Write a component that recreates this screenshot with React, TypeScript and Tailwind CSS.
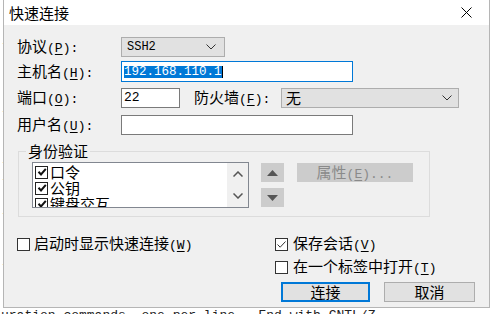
import React from "react";

const cjk = "font-['Noto_Sans_CJK_SC',sans-serif]";
const mono = "font-['Liberation_Mono',monospace]";

const terminalLines = [
  "",
  "- ",
  "",
  ".",
  "",
  "-",
  "",
  "",
  "-",
  "- ",
  "",
  "-",
  "",
  ".",
  "-",
  "",
  ".",
  "uration commands, one per line.  End with CNTL/Z.",
];

function Accel({ text, k, colon = true }: { text: string; k: string; colon?: boolean }) {
  return (
    <span className="whitespace-nowrap">
      {text}
      <span className={`${mono} text-[13px]`}>
        (<span className="underline underline-offset-2">{k}</span>){colon ? ":" : ""}
      </span>
    </span>
  );
}

function Chevron() {
  return (
    <svg width="10" height="6" viewBox="0 0 10 6">
      <path d="M0.5 0.5 L5 5 L9.5 0.5" fill="none" stroke="#333" strokeWidth="1" />
    </svg>
  );
}

function CheckBox({ checked }: { checked: boolean }) {
  return (
    <span className="flex h-[13px] w-[13px] shrink-0 items-center justify-center border border-[#333] bg-white">
      {checked && (
        <svg width="11" height="11" viewBox="0 0 11 11">
          <path d="M1.5 5.5 L4.2 8.2 L9.5 2.5" fill="none" stroke="#333" strokeWidth="1" />
        </svg>
      )}
    </span>
  );
}

function ListCheck() {
  return (
    <span className="flex h-[13px] w-[13px] shrink-0 items-center justify-center border-[1.5px] border-[#222] bg-white">
      <svg width="10" height="10" viewBox="0 0 10 10">
        <path d="M1.5 4.8 L4 7.5 L8.8 1.8" fill="none" stroke="#111" strokeWidth="2" />
      </svg>
    </span>
  );
}

function Row({ children, className = "" }: { children: React.ReactNode; className?: string }) {
  return <div className={`flex items-center ${className}`}>{children}</div>;
}

export default function App() {
  const authItems = ["口令", "公钥", "键盘交互"];

  return (
    <div className={`relative h-[314px] w-[492px] overflow-hidden bg-white ${cjk}`}>
      {/* terminal behind the dialog */}
      <div className={`flex flex-col pt-[18px] text-[13px] leading-[17px] text-[#222] ${mono}`}>
        {terminalLines.map((line, i) => (
          <div key={i} className="h-[17px] whitespace-pre pl-[1px]">
            {line}
          </div>
        ))}
      </div>

      <div className="absolute left-[3px] top-0 flex h-[308px] w-[487px] flex-col border-x border-b border-[#b5b5b5] text-[15px] text-black">
        {/* title bar */}
        <div className="flex h-[25px] items-center justify-between bg-white">
          <span className="pl-[5px] leading-[25px]">快速连接</span>
          <span className="flex h-[25px] w-[46px] items-center justify-center">
            <svg width="11" height="11" viewBox="0 0 11 11">
              <path d="M0.5 0.5 L10.5 10.5 M10.5 0.5 L0.5 10.5" stroke="#000" strokeWidth="1" />
            </svg>
          </span>
        </div>

        {/* body */}
        <div className="flex flex-1 flex-col bg-[#f0f0f0] pl-[13px] pt-[12px]">
          <Row className="h-[20px]">
            <span className="w-[104px]">
              <Accel text="协议" k="P" />
            </span>
            <div className="flex h-[20px] w-[104px] items-center justify-between border border-[#adadad] bg-[#e1e1e1] pl-[5px] pr-[8px]">
              <span className={`${mono} text-[12px]`}>SSH2</span>
              <Chevron />
            </div>
          </Row>

          <Row className="mt-[4px] h-[21px]">
            <span className="w-[104px]">
              <Accel text="主机名" k="H" />
            </span>
            <div className="flex h-[21px] w-[232px] items-center border border-[#0078d7] bg-white pl-[2px]">
              <span className={`${mono} border-r border-black bg-[#0078d7] text-[12.5px] leading-[12px] text-white`}>
                192.168.110.1
              </span>
            </div>
          </Row>

          <Row className="mt-[6px] h-[20px]">
            <span className="w-[104px]">
              <Accel text="端口" k="O" />
            </span>
            <div className="flex h-[20px] w-[59px] items-center border border-[#7a7a7a] bg-white pl-[2px]">
              <span className={`${mono} text-[13px]`}>22</span>
            </div>
            <span className="ml-[14px] w-[87px]">
              <Accel text="防火墙" k="F" />
            </span>
            <div className="flex h-[20px] w-[178px] items-center justify-between border border-[#adadad] bg-[#e1e1e1] pl-[4px] pr-[6px]">
              <span>无</span>
              <Chevron />
            </div>
          </Row>

          <Row className="mt-[7px] h-[20px]">
            <span className="w-[104px]">
              <Accel text="用户名" k="U" />
            </span>
            <div className="h-[20px] w-[232px] border border-[#7a7a7a] bg-white" />
          </Row>

          {/* authentication group */}
          <fieldset className="ml-[1px] mt-[7px] w-[412px] border border-[#dcdcdc] pb-[8px]">
            <legend className="ml-[7px] px-[2px] leading-[18px]">身份验证</legend>
            <div className="flex pl-[13px] pt-[2px]">
              <div className="flex h-[46px] w-[217px] border border-[#828790] bg-white">
                <div className="flex flex-1 flex-col overflow-hidden pl-[2px] pt-[1px]">
                  {authItems.map((item) => (
                    <div key={item} className="flex h-[16px] shrink-0 items-center gap-[2px] leading-[16px]">
                      <ListCheck />
                      <span>{item}</span>
                    </div>
                  ))}
                </div>
                <div className="flex w-[21px] flex-col bg-[#f0f0f0]">
                  <div className="flex flex-1 items-center justify-center">
                    <svg width="10" height="6" viewBox="0 0 10 6">
                      <path d="M0.5 5.5 L5 1 L9.5 5.5" fill="none" stroke="#555" strokeWidth="1.5" />
                    </svg>
                  </div>
                  <div className="flex flex-1 items-center justify-center">
                    <svg width="10" height="6" viewBox="0 0 10 6">
                      <path d="M0.5 0.5 L5 5 L9.5 0.5" fill="none" stroke="#555" strokeWidth="1.5" />
                    </svg>
                  </div>
                </div>
              </div>

              <div className="ml-[12px] mt-[1px] flex flex-col gap-[6px]">
                <div className="flex h-[19px] w-[23px] items-center justify-center bg-[#cccccc]">
                  <svg width="11" height="6" viewBox="0 0 11 6">
                    <path d="M0 6 L5.5 0 L11 6 Z" fill="#555" />
                  </svg>
                </div>
                <div className="flex h-[19px] w-[23px] items-center justify-center bg-[#cccccc]">
                  <svg width="11" height="6" viewBox="0 0 11 6">
                    <path d="M0 0 L5.5 6 L11 0 Z" fill="#555" />
                  </svg>
                </div>
              </div>

              <div className="ml-[13px] mt-[1px] flex h-[19px] w-[116px] items-center justify-center bg-[#cccccc] text-[#8a8a8a]">
                <span>
                  属性
                  <span className={`${mono} text-[13px]`}>
                    (<span className="underline underline-offset-2">E</span>)...
                  </span>
                </span>
              </div>
            </div>
          </fieldset>

          {/* options and buttons */}
          <div className="mt-[19px] flex">
            <div className="w-[258px]">
              <label className="flex h-[16px] items-center gap-[4px] leading-[16px]">
                <CheckBox checked={false} />
                <Accel text="启动时显示快速连接" k="W" colon={false} />
              </label>
            </div>
            <div className="flex flex-col">
              <label className="flex h-[16px] items-center gap-[5px] leading-[16px]">
                <CheckBox checked />
                <Accel text="保存会话" k="V" colon={false} />
              </label>
              <label className="mt-[7px] flex h-[16px] items-center gap-[5px] leading-[16px]">
                <CheckBox checked={false} />
                <Accel text="在一个标签中打开" k="T" colon={false} />
              </label>
              <div className="ml-[6px] mt-[7px] flex gap-[14px]">
                <button
                  type="button"
                  className="flex h-[20px] w-[89px] items-center justify-center border-2 border-[#0078d7] bg-[#e1e1e1] leading-[16px]"
                >
                  连接
                </button>
                <button
                  type="button"
                  className="flex h-[20px] w-[91px] items-center justify-center border border-[#adadad] bg-[#e1e1e1] leading-[18px]"
                >
                  取消
                </button>
              </div>
            </div>
          </div>
        </div>
      </div>
    </div>
  );
}
